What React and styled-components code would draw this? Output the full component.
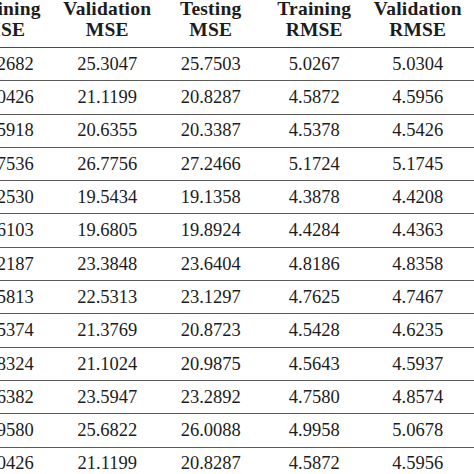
import React from 'react';
import styled, { createGlobalStyle } from 'styled-components';

const GlobalStyle = createGlobalStyle`
  html, body {
    margin: 0;
    padding: 0;
    background: #ffffff;
  }
`;

const columns = [
    { top: 'Training', bottom: 'MSE' },
    { top: 'Validation', bottom: 'MSE' },
    { top: 'Testing', bottom: 'MSE' },
    { top: 'Training', bottom: 'RMSE' },
    { top: 'Validation', bottom: 'RMSE' },
];

const rows = [
    ['25.2682', '25.3047', '25.7503', '5.0267', '5.0304'],
    ['21.0426', '21.1199', '20.8287', '4.5872', '4.5956'],
    ['20.5918', '20.6355', '20.3387', '4.5378', '4.5426'],
    ['26.7536', '26.7756', '27.2466', '5.1724', '5.1745'],
    ['19.2530', '19.5434', '19.1358', '4.3878', '4.4208'],
    ['19.6103', '19.6805', '19.8924', '4.4284', '4.4363'],
    ['23.2187', '23.3848', '23.6404', '4.8186', '4.8358'],
    ['22.5813', '22.5313', '23.1297', '4.7625', '4.7467'],
    ['20.5374', '21.3769', '20.8723', '4.5428', '4.6235'],
    ['21.8324', '21.1024', '20.9875', '4.5643', '4.5937'],
    ['22.6382', '23.5947', '23.2892', '4.7580', '4.8574'],
    ['24.9580', '25.6822', '26.0088', '4.9958', '5.0678'],
    ['21.0426', '21.1199', '20.8287', '4.5872', '4.5956'],
];

const App = () => {
    return (
        <>
            <GlobalStyle />
            <Frame>
                <Table>
                    <HeaderRow>
                        {columns.map((col, i) => (
                            <HeadCell key={i}>
                                <span>{col.top}</span>
                                <span>{col.bottom}</span>
                            </HeadCell>
                        ))}
                    </HeaderRow>
                    {rows.map((row, r) => (
                        <Row key={r}>
                            {row.map((value, c) => (
                                <Cell key={c}>{value}</Cell>
                            ))}
                        </Row>
                    ))}
                </Table>
            </Frame>
        </>
    );
};

const Frame = styled.div`
width: 474px;
height: 474px;
overflow: hidden;
background: #ffffff;
`;

// the screenshot is a crop of a wider table, so the table starts left of the frame
const Table = styled.div`
margin-left: -48px;
width: 570px;
font-family: "Liberation Serif", "Times New Roman", serif;
font-size: 18.5px;
color: #1c1c1c;
`;

const HeaderRow = styled.div`
display: grid;
grid-template-columns: repeat(5, 103.5px);
box-sizing: border-box;
height: 48px;
padding-bottom: 8px;
border-bottom: 1.6px solid #4a4a4a;
`;

const HeadCell = styled.div`
display: flex;
flex-direction: column;
align-items: center;
gap: 3px;
font-weight: bold;
font-size: 19.5px;
line-height: 18px;
letter-spacing: 0.2px;
`;

const Row = styled.div`
display: grid;
grid-template-columns: repeat(5, 103.5px);
align-items: center;
box-sizing: border-box;
height: 33.3px;
border-bottom: 1.4px solid #5a5a5a;
`;

const Cell = styled.div`
text-align: center;
line-height: 1;
`;

export default App;
